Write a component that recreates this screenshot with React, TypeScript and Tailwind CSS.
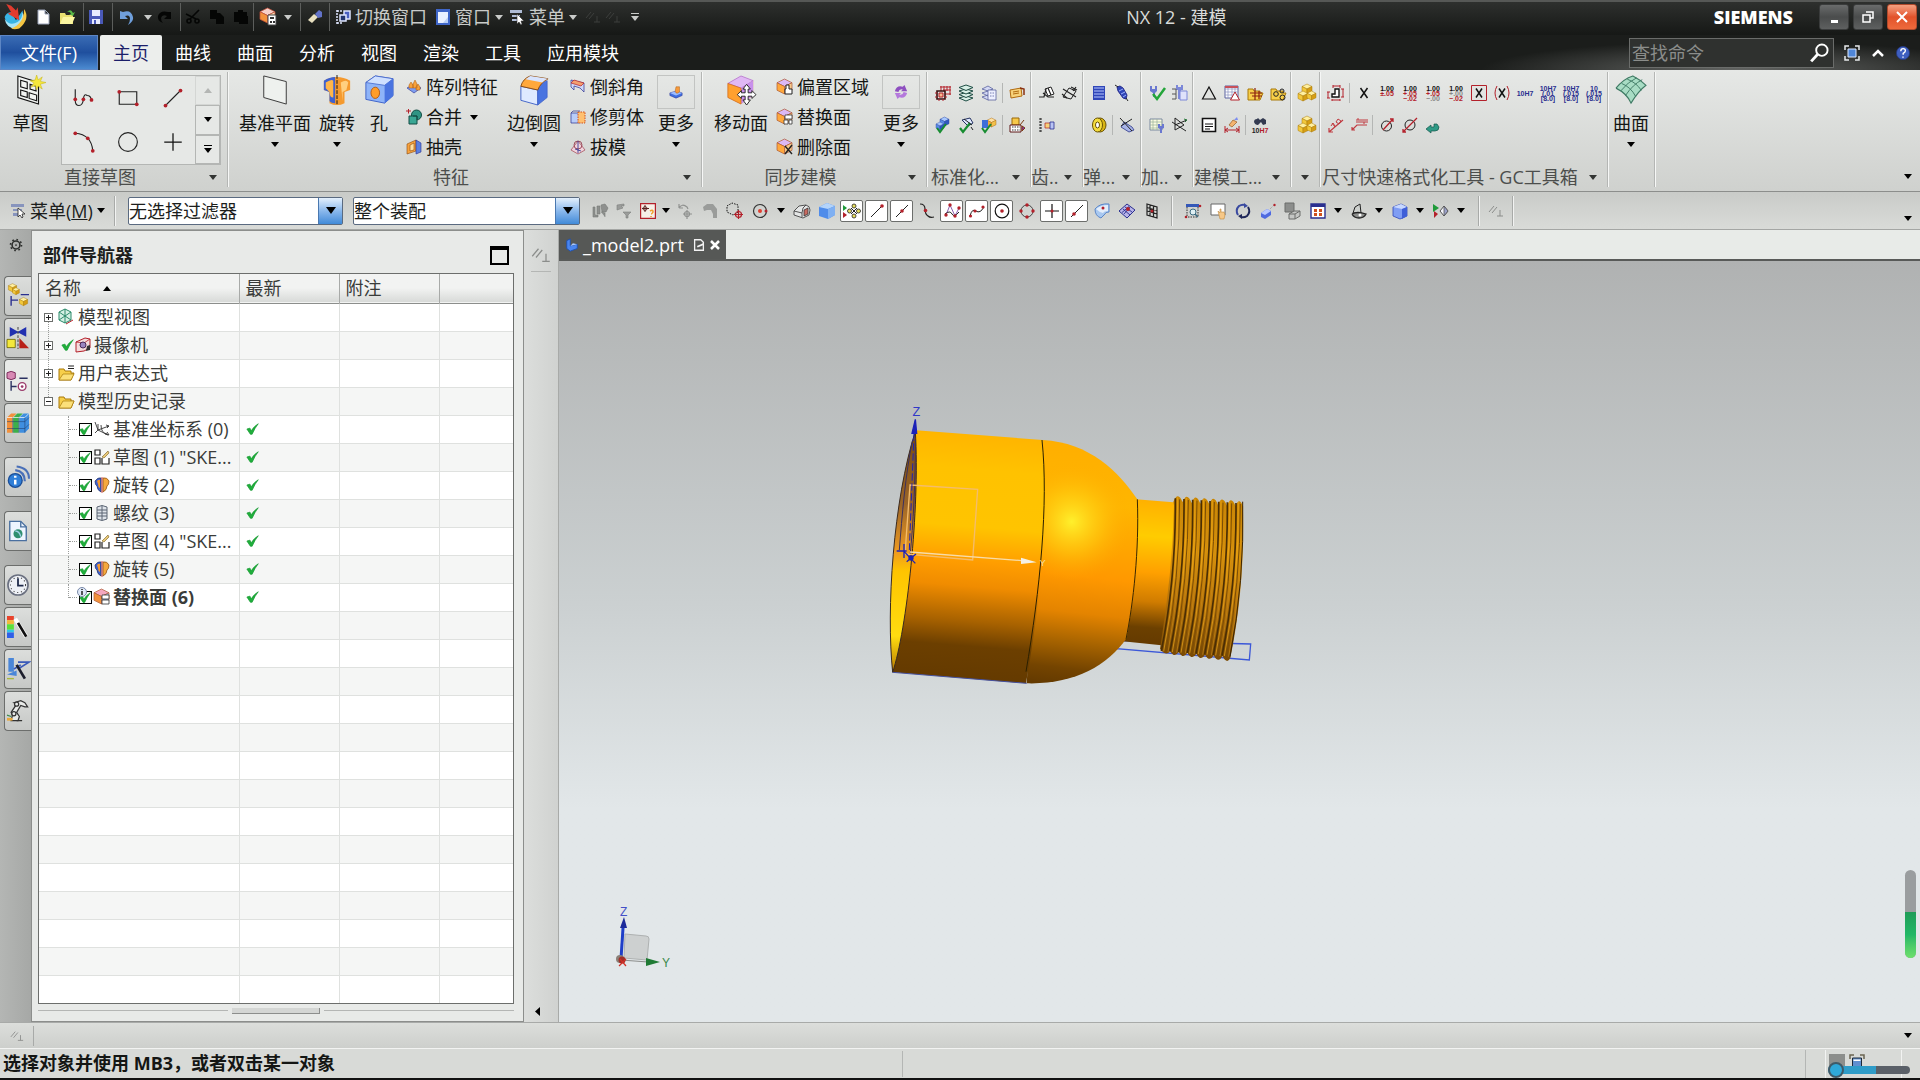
import { useState } from "react";
import type { ReactNode } from "react";
import clsx from "clsx";

const RED = "#b3202a";
const NAVY = "#2a2f8f";

/* ---------- drawing helpers ---------- */

interface CubeProps {
  x?: number;
  y?: number;
  s?: number;
  top?: string;
  left?: string;
  right?: string;
  line?: string;
}

function Cube({
  x = 1,
  y = 1,
  s = 14,
  top = "#cfe0ff",
  left = "#7fa6f5",
  right = "#3b63d0",
  line = "#2c48a0",
}: CubeProps) {
  const h = s / 2;
  const q = s / 4;
  return (
    <g stroke={line} strokeWidth={s / 20} strokeLinejoin="round">
      <path d={`M${x} ${y + q}l${h} ${-q}l${h} ${q}l${-h} ${q}z`} fill={top} />
      <path d={`M${x} ${y + q}l${h} ${q}v${h}l${-h} ${-q}z`} fill={left} />
      <path d={`M${x + s} ${y + q}l${-h} ${q}v${h}l${h} ${-q}z`} fill={right} />
    </g>
  );
}

const orangeCube = (
  <Cube x={0} y={0} s={15} top="#dcb8f4" left="#ffa83c" right="#f6c98c" line="#b0603c" />
);

const yellowCubes = (
  <>
    <Cube x={3} y={-1} s={10} top="#fff0a0" left="#f2c83c" right="#d69e14" line="#a87808" />
    <Cube x={-1} y={6} s={10} top="#fff0a0" left="#f2c83c" right="#d69e14" line="#a87808" />
    <Cube x={8} y={6} s={9} top="#fff0a0" left="#f2c83c" right="#d69e14" line="#a87808" />
  </>
);

const folder = (
  <path d="M1 4h5l1 2h6v2h3l-3 7H1z" fill="#f7cf4a" stroke="#a87808" />
);

const tick = (
  <path d="M1 8l3.500-1l1.500 3q3-5 8-8q-4 5-7 12H5z" fill="#1fae3a" stroke="#149a30" strokeWidth=".8" />
);

function Dots({ points, fill = RED, r = 1.3 }: { points: number[][]; fill?: string; r?: number }) {
  return (
    <>
      {points.map(([x, y]) => (
        <circle key={`${x}-${y}`} cx={x} cy={y} r={r} fill={fill} />
      ))}
    </>
  );
}

function Tolerance({ rows, colors }: { rows: string[]; colors: string[] }) {
  return (
    <g fontFamily="Liberation Sans" fontWeight="bold" textAnchor="middle" fontSize="7">
      {rows.map((row, i) => (
        <text key={i} x="8" y={6 + i * 5} fill={colors[i]}>
          {row}
        </text>
      ))}
    </g>
  );
}

/* ---------- icons, all on a 16 x 16 grid ---------- */

const icons: Record<string, ReactNode> = {
  logo: (
    <>
      <path d="M1 8q1-3 4-3l3 5l4-6q2 7-4 11q-6-1-7-7" fill="#38b4e4" />
      <path d="M1 9q3 5 8 2q3-2 3-6q3 7-4 10q-6 0-7-6" fill="#a8e4f6" />
      <path d="M2 0l3 1l3 3l1-2l1 8L3 6l2-1z" fill="#e23b2e" />
      <path d="M13 3q4 6-3 12q-3 1-5 0q8-3 8-12" fill="#f4c542" />
    </>
  ),
  newFile: <path d="M3 1h7l4 4v10H3zM10 1v4h4" fill="#fff" stroke="#9aa3b8" />,
  open: (
    <>
      <path d="M1 4h5l1 2h7v9H1z" fill="#e8e070" />
      <path d="M4 8h12l-3 7H1z" fill="#fbf6a0" />
      <path d="M8 3q4-4 6 1l2-1l-2 4l-4-2h2q-1-3-4-2" fill="#58b948" />
    </>
  ),
  save: (
    <>
      <path d="M1 1h14v14H1z" fill="#4a59b8" />
      <path d="M4 1h8v6H4zM4 10h8v5H4z" fill="#e8ecff" />
      <path d="M6 11h2v4H6z" fill="#4a59b8" />
    </>
  ),
  undo: <path d="M1 2v8h8l-3-3q5-2 5 3q0 3-2 6q6-4 5-8q-2-8-10-5z" fill="#6f9fdc" />,
  redo: <path d="M15 3v7H8l3-3q-5-2-6 2q0 3 2 5q-6-2-5-7q2-6 10-4z" fill="#050605" />,
  cut: (
    <g stroke="#050605" strokeWidth="1.600" fill="none">
      <path d="M14 1L5 10M1 5l10 5" />
      <circle cx="4" cy="12" r="2" />
      <circle cx="12" cy="12" r="2" />
    </g>
  ),
  copy: <path d="M1 1h7v3h3l4 4v7H7v-5H1z" fill="#050605" />,
  paste: <path d="M1 3h4V1h5v2h4v4h1v8H6v-2H1z" fill="#050605" />,
  command: (
    <>
      <Cube x={-1} y={-1} s={15} top="#f7d0c8" left="#f2913c" right="#f8d9b0" line="#c0503c" />
      <path d="M7 6h8v10H7z" fill="#fff" stroke="#444" />
      <path d="M9 8h4v2H9zM9 12h2v2H9zM12 12h2v2h-2z" fill="#333" />
    </>
  ),
  touch: (
    <>
      <path d="M1 11l6-6l4 3l-6 6z" fill="#e8e0c0" />
      <path d="M8 5l4-4l3 2v5l-4 1z" fill="#6272c8" />
    </>
  ),
  switchWindow: (
    <g fill="none" stroke="#dfe6ff" strokeWidth="1.500">
      <path d="M2 1v14M2 2h5M2 14h5" strokeDasharray="2 1" />
      <path d="M9 2h6v8H9z" fill="#4a60c0" />
      <path d="M5 6h6v6H5z" fill="#22356f" />
    </g>
  ),
  window: (
    <>
      <path d="M1 0h14v16H1z" fill="#3f66c8" />
      <path d="M3 3h10v11H3z" fill="#eaf1ff" />
      <path d="M8 14l5-6v6z" fill="#b9cff5" />
    </>
  ),
  menuLight: (
    <>
      <path d="M1 1h12v3H1zM3 6h8v2H3zM3 10h6v2H3z" fill="#aebbd6" />
      <path d="M8 5v10l2-2l2 3l1-1l-1-3h3z" fill="#fff" stroke="#333" strokeWidth=".6" />
    </>
  ),
  menuDark: (
    <>
      <path d="M1 1h13v3H1zM3 6h9v2H3zM3 10h6v3H3z" fill="#8794bd" />
      <path d="M8 5v9l2-2l2 3l1-1l-1-3h3z" fill="#fff" stroke="#222" strokeWidth=".8" />
    </>
  ),
  perp: <path d="M1 9l5-6M4 10l5-6M12 7v6M9 13h6" stroke="#8b8d8b" fill="none" />,
  perpDim: <path d="M1 9l5-6M4 10l5-6M12 7v6M9 13h6" stroke="#3d3f3d" fill="none" />,
  fullscreen: (
    <>
      <path d="M1 5V1h4M11 1h4v4M15 11v4h-4M5 15H1v-4" stroke="#e8eaec" strokeWidth="1.500" fill="none" />
      <path d="M4 4h8v8H4z" fill="#4f86d8" stroke="#dce8ff" />
    </>
  ),
  fullscreenDark: (
    <>
      <path d="M1 5V1h4M11 1h4v4" stroke="#6a6450" strokeWidth="1.500" fill="none" />
      <path d="M3.500 4h9v9h-9z" fill="#5f8fd0" stroke="#1c2a3a" />
      <path d="M4.500 5.500h7v1.500h-7z" fill="#fff" />
    </>
  ),
  help: (
    <>
      <circle cx="8" cy="8" r="7.500" fill="#3e5fc0" stroke="#26387c" />
      <path d="M5.500 6q0-3 2.700-3t2.500 2.500q0 1.500-2.500 3v1.500M8 12v1.500" stroke="#fff" strokeWidth="1.600" fill="none" />
    </>
  ),
  search: (
    <g stroke="#fff" fill="none">
      <circle cx="10" cy="6" r="4.800" strokeWidth="1.600" />
      <path d="M6.500 9.500L1 15.500" strokeWidth="2.400" />
    </g>
  ),

  sketch: (
    <g fill="none" stroke="#111" strokeWidth=".6">
      <path d="M1 .5l11 3.500v11.500L1 12z" fill="#f2f4f2" />
      <path d="M2.500 2.800l3.500 1v3.500l-3.500-1zM7.500 5l3.200 1v2.500l-3.200-1zM2.500 8l3.500 1v3l-3.500-1zM7 9.500l4 1.200v3L7 12.500z" />
      <path d="M11 0l.8 2.600L14 1l-1 2.400l3 .6l-3 .9l1 2.600l-2.200-1.600L11 8l-.6-2.400L8 6.500l1.600-2.200L7.500 3l2.700-.3z" fill="#f6e83c" stroke="#c8b820" strokeWidth=".3" />
    </g>
  ),
  profile: (
    <>
      <path d="M1 1v9q0 4 3 4t3.500-5t3-3q3 0 3.500 4" stroke="#222" fill="none" strokeWidth=".9" />
      <Dots points={[[1, 9], [7.500, 9], [14, 9.500]]} r={1.5} />
    </>
  ),
  rect: (
    <>
      <path d="M1 3h14v10H1z" stroke="#222" fill="none" strokeWidth=".9" />
      <Dots points={[[1, 3], [15, 13]]} r={1.5} />
    </>
  ),
  line: (
    <>
      <path d="M2 14L14 2" stroke="#222" strokeWidth=".9" />
      <Dots points={[[2, 14], [14, 2]]} r={1.5} />
    </>
  ),
  arc: (
    <>
      <path d="M1 1q13 1 14 14" stroke="#222" fill="none" strokeWidth=".9" />
      <Dots points={[[1, 1], [11, 5], [15, 15]]} r={1.5} />
    </>
  ),
  circle: <circle cx="8" cy="8" r="7.500" stroke="#222" fill="none" strokeWidth=".9" />,
  plus: <path d="M8 1v14M1 8h14" stroke="#111" />,
  datumPlane: <path d="M2 .5l12 3v12L2 12z" fill="#eef1ee" stroke="#333" strokeWidth=".5" />,
  revolve: (
    <>
      <path d="M1 3q7-4 14 0v5l-3 1v6q-4 2-8 0V9L1 8z" fill="#f59a2e" />
      <path d="M1 3q3-2 6-2v14q-2 0-3-1V9L1 8z" fill="#3f62d0" />
      <path d="M2 4q3-2 4-1v9q-2 0-2-3L2 7z" fill="#ffb64a" />
      <path d="M10 4q3-2 4 0l-1 4l-2 1v5z" fill="#ffd080" />
      <path d="M8 0v16" stroke="#111" strokeWidth=".5" strokeDasharray="2 .7" />
    </>
  ),
  revolveNode: (
    <>
      <path d="M1 4q3-4 6-3v14q-4-2-4-6q-2-1-2-5" fill="#3f62d0" stroke="#23305f" strokeWidth=".7" />
      <path d="M3 4q2-2 3-1v8q-2-1-2-4z" fill="#f59a2e" />
      <path d="M9 1q4-1 6 3q0 4-2 5q0 4-4 6z" fill="#f5a83e" stroke="#8a4a10" strokeWidth=".7" />
      <path d="M8 0v16" stroke="#c02020" strokeWidth=".8" />
    </>
  ),
  hole: (
    <>
      <path d="M1 4l5-3.500l9.500 1.500v9L11 15L1 13z" fill="#8fb4f8" stroke="#3f62c8" strokeWidth=".5" />
      <path d="M1 4l10 1.500l4.500-3.500L6 .5z" fill="#cfe0ff" stroke="#3f62c8" strokeWidth=".4" />
      <path d="M11 5.500l4.500-3.500v9L11 15z" fill="#4a74e0" />
      <ellipse cx="6" cy="9.500" rx="2.300" ry="3" fill="#ff9d2a" stroke="#b35a10" strokeWidth=".5" />
    </>
  ),
  pattern: (
    <>
      <path d="M1 9l7-4l7 4l-7 5z" fill="#7d9df0" stroke={NAVY} strokeWidth=".6" />
      <path d="M3 6l2-3l2 3v3H3zM7 5l2-4l2 4v4H7zM10 8l2-3l2 3v3h-4z" fill="#f7a23c" stroke="#a85a10" strokeWidth=".5" />
    </>
  ),
  unite: (
    <>
      <circle cx="10.500" cy="6" r="5" fill="#2f9484" stroke="#124d44" />
      <path d="M3 7h8v8H3z" fill="#3aa794" stroke="#124d44" />
      <path d="M7 7h4v4" fill="none" stroke="#124d44" />
      <path d="M0 2h5M2.500 0v4.500" stroke={RED} />
    </>
  ),
  shell: (
    <>
      <path d="M1 5l9-4v11l-9 3z" fill="#f7a23c" stroke="#8a4a10" strokeWidth=".6" />
      <path d="M10 1l5 3v9l-5 2z" fill="#5a80e0" stroke={NAVY} strokeWidth=".6" />
      <path d="M4 6l4-2v7l-4 1z" fill="#ffe0a0" stroke="#8a4a10" strokeWidth=".6" />
    </>
  ),
  edgeBlend: (
    <>
      <path d="M1 6l9 2v8L1 13.500z" fill="#dfeaff" stroke="#3f62c8" strokeWidth=".5" />
      <path d="M10 8q1-4 5-5v9l-5 4z" fill="#4a74e0" stroke="#3f62c8" strokeWidth=".4" />
      <path d="M1 6q1-4 5-5.500l9.500 1.500q-4 2-5.500 6z" fill="#ffa83c" stroke="#8a4a10" strokeWidth=".5" />
      <path d="M6 .5l9.500 1.500q-2 .6-3 2L3.500 2.200z" fill="#d8e4ff" />
    </>
  ),
  chamfer: (
    <>
      <path d="M1 1l13 3v9l-4-4l-6-2v4L1 8z" fill="#cfd9f8" stroke={NAVY} strokeWidth=".7" />
      <path d="M1 4l10 3l3-3L4 1z" fill="#f4a070" stroke={RED} strokeWidth=".7" />
    </>
  ),
  trim: (
    <>
      <path d="M1 4h8v10H1z" fill="#b9ccf8" stroke={NAVY} strokeWidth=".7" />
      <path d="M8 3h7v11H8z" fill="#ffc070" stroke="#d0501c" strokeDasharray="1.500 1" />
      <path d="M1 4l2-2h7" fill="none" stroke={NAVY} strokeWidth=".7" />
    </>
  ),
  draft: (
    <>
      <path d="M1 11l7-9l7 9l-7 4z" fill="#f0d4dc" stroke="#a04050" strokeWidth=".7" />
      <circle cx="8" cy="6" r="4" fill="none" stroke="#a05060" />
      <path d="M8 2v12M5 10l6 2" stroke={NAVY} strokeWidth=".8" />
    </>
  ),
  more: (
    <>
      <path d="M1 9l7-2l7 2v3l-7 3l-7-3z" fill="#3f6fe0" stroke={NAVY} strokeWidth=".6" />
      <path d="M1 9l7 3l7-3l-7-2z" fill="#9dbcff" />
      <path d="M8 2h4v6q-2 2-4 1l-1-2z" fill="#f79a3c" stroke="#a85a10" strokeWidth=".5" />
    </>
  ),
  moveFace: (
    <>
      <path d="M1 4.500L8 .5l6.500 2.500v8L8 15.500L1 12z" fill="#f6b061" />
      <path d="M1 4.500L8 .5l6.500 2.500L8 7z" fill="#e0b8f4" stroke="#b070d8" strokeWidth=".4" />
      <path d="M8 7l6.500-4v8L8 15.500z" fill="#c890ec" />
      <path d="M1 4.500L8 7v8.500L1 12z" fill="#ffa02e" stroke="#d06a1c" strokeWidth=".4" />
      <path d="M11 5l2 2.500h-1.200V9.500h2V8.300L16 10.500l-2.200 2v-1.200h-2v2H13L11 16l-2-2.700h1.200v-2h-2v1.200L6 10.500l2.200-2.200v1.200h2v-2H9z" fill="#fff" stroke="#222" strokeWidth=".5" />
    </>
  ),
  offsetRegion: (
    <>
      {orangeCube}
      <path d="M9 6h3v4h3v5H8v-5h1z" fill="#fff" stroke="#222" />
    </>
  ),
  replaceFace: (
    <>
      {orangeCube}
      <path d="M8 6h7v4H8zM7 11h4v4H7zM12 11h3v4h-3z" fill="#fff" stroke="#333" strokeWidth=".8" />
    </>
  ),
  deleteFace: (
    <>
      {orangeCube}
      <path d="M8 7l7 8M15 6l-7 9" stroke="#222" strokeWidth="1.400" />
    </>
  ),
  refresh: (
    <>
      <path d="M1 7q2-7 9-5l2-2l3 7H8l2-2q-4-1-5 3z" fill="#8e4fc0" />
      <path d="M15 9q-2 7-9 5l-2 2l-3-7h7l-2 2q4 1 5-3z" fill="#b478dc" />
    </>
  ),

  stdFrame: (
    <g fill="none" stroke={RED}>
      <path d="M6 1v5M9 1v5M12 1v5M15 1v9M5 2h11M8 5h8M10 9h6" />
      <path d="M2 6h8v8H2z" stroke="#3a1010" strokeWidth="1.600" />
      <path d="M4 8h4v4H4z" fill="#fbb890" />
      <path d="M0 8h2M0 12h2M10 12h2M4 14v2M8 14v2" />
    </g>
  ),
  layers: (
    <g fill="#d8efe6" stroke="#1e4d44" strokeWidth="1">
      <path d="M1 13l7-2l7 2l-7 3z" />
      <path d="M1 9.500l7-2l7 2l-7 3z" />
      <path d="M1 6l7-2l7 2l-7 3z" />
      <path d="M1 2.500l7-2.500l7 2.500l-7 3z" />
    </g>
  ),
  layersDoc: (
    <g stroke="#5a62a0" strokeWidth=".8" fill="#d4d9f4">
      <path d="M1 12l6-2l5 2l-5 3zM1 8l6-2l5 2l-5 3zM1 4l6-3l5 3l-5 2z" />
      <path d="M7 5h8v10H7z" fill="#eef0ff" />
      <path d="M9 8h4M9 11h4" strokeDasharray="1.500 1" />
    </g>
  ),
  note: (
    <>
      <path d="M1 5l11-2l1 8l-11 2z" fill="#f7d27a" stroke="#b06a10" />
      <path d="M4 7l6-1M4 9l6-1" stroke="#b06a10" />
      <path d="M11 3l4 1v6" fill="none" stroke="#8a3010" strokeWidth="1.500" />
    </>
  ),
  checkPart: (
    <>
      <Cube x={5} y={0} s={9} top="#a8c8ff" left="#5a8ae8" right="#2f58c0" />
      <Cube x={1} y={5} s={8} top="#a8c8ff" left="#5a8ae8" right="#2f58c0" />
      <path d="M2 11l3 4l6-8" fill="none" stroke="#178c30" strokeWidth="2" />
    </>
  ),
  checkDraft: (
    <>
      <path d="M4 3l8-2l3 5l-5 3z" fill="#dfe8ff" stroke="#23305f" />
      <path d="M2 11l3 4l7-9" fill="none" stroke="#178c30" strokeWidth="2.200" />
      <path d="M6 2l8 6M13 10l2 3" stroke="#222" />
    </>
  ),
  checkAsm: (
    <>
      <Cube x={6} y={1} s={9} top="#ffe0a0" left="#f7a83c" right="#f2c04a" line="#a86a10" />
      <path d="M1 3h6v8H1z" fill="#3f6ed8" />
      <path d="M1 11l3 4l6-8" fill="none" stroke="#178c30" strokeWidth="2" />
    </>
  ),
  stdParts: (
    <>
      <path d="M3 1h7v7H3z" fill="#f7c94a" stroke="#9a6808" />
      <path d="M1 8h11v7H1z" fill="#fff" stroke="#5a1515" />
      <path d="M3 10h8M3 13h8" stroke="#333" strokeDasharray="1.500 1" />
      <path d="M15 3l-4 5M13 9l3 2l-3 3z" fill="#9030b0" stroke="#7a3a10" />
    </>
  ),
  gearA: (
    <>
      <path d="M6 4l6-2l3 7l-6 2z" fill="#fff" stroke="#222" />
      <path d="M0 12h5l2-8M4 8l5 4h6M9 3l3 7" stroke="#222" fill="none" strokeWidth="1.200" />
    </>
  ),
  gearB: (
    <>
      <path d="M1 12l6-9l7 3l-5 8z" fill="#e2e4e2" stroke="#222" />
      <path d="M1 4l13 8M0 9l5 4M9 2l6 3M14 2l-3 4" stroke="#222" strokeWidth="1.200" />
    </>
  ),
  gearList: (
    <>
      <path d="M1 1v14M1 2h3M1 5h3M1 8h3M1 11h3M1 14h3" stroke="#222" strokeDasharray="2 1" />
      <path d="M6 6h6v5H6z" fill="#f7d27a" stroke="#b02020" strokeWidth=".7" />
      <path d="M11 5h4v7h-4z" fill="#b9c4f4" stroke={NAVY} strokeWidth=".8" />
    </>
  ),
  spring: (
    <>
      <path d="M2 1h12v14H2z" fill="#2f46b8" />
      <path d="M3 3h10M3 6h10M3 9h10M3 12h10" stroke="#b9c8ff" />
    </>
  ),
  springTilt: (
    <>
      <path d="M3 2l3-1l3 2l4 7l-1 4l-3-1l-5-7z" fill="#2f46b8" stroke={NAVY} />
      <path d="M5 6l4-2M7 9l4-2M9 12l3-2" stroke="#9fb2ff" />
      <path d="M1 0l3 2M12 13l2 3" stroke="#222" />
    </>
  ),
  springDisc: (
    <>
      <ellipse cx="9" cy="8" rx="6" ry="7" fill="#d8b414" stroke="#6a5404" />
      <ellipse cx="6.500" cy="8" rx="5" ry="7" fill="#f4dc3c" stroke="#6a5404" />
      <ellipse cx="6.500" cy="8" rx="2" ry="3" fill="#fff" stroke="#6a5404" />
    </>
  ),
  springCut: (
    <>
      <path d="M5 5l8 5l2 3l-5 2l-8-5z" fill="#a8b4e8" stroke="#4a549a" />
      <path d="M1 1l12 13M13 2L2 9" stroke="#222" />
    </>
  ),
  machCheck: (
    <>
      <path d="M1 1h2v3h3V1h2v5L6 8v4H4V8L1 6z" fill="#6a78d0" />
      <path d="M4 9l4 5l8-11" fill="none" stroke="#23a53a" strokeWidth="2.500" />
    </>
  ),
  machDoc: (
    <>
      <path d="M4 0h2v2h3V0h2v5H4zM6 5h3v9H6z" fill="#7c88d8" />
      <path d="M0 4h4v10H0M0 9h4" fill="none" stroke="#555" />
      <path d="M8 6h7v9H8z" fill="#dfe2fb" stroke="#7c88d8" />
    </>
  ),
  machTable: (
    <>
      <path d="M1 2h12v11H1z" fill="#fbfbe0" stroke="#7a8aa0" />
      <path d="M1 5h12M1 8h12M1 11h12M4 2v11M8 2v11" stroke="#9ab09a" strokeWidth=".7" />
      <path d="M9 7h2v2h2V7h2v4l-2 1v4h-2v-4l-2-1z" fill="#6a78d0" />
    </>
  ),
  machAxis: (
    <g fill="none" stroke="#222">
      <path d="M3 1v12l9-5zM0 5l14 9M3 8l12-5" />
      <path d="M12 2l3 1l-2 2" stroke="#2a7a3a" />
    </g>
  ),
  triangle: <path d="M8 2l6.500 12h-13z" fill="none" stroke="#111" strokeWidth="1.200" />,
  gridTri: (
    <>
      <path d="M1 1h13v12H1z" fill="#fff" stroke="#5a62a0" />
      <path d="M1 4h13M1 7h13M1 10h13M4 1v12M8 1v12M11 1v12" stroke="#8a92c0" strokeWidth=".7" />
      <path d="M1 1h13v2H1z" fill="#c8505a" />
      <path d="M11 7l4.500 8h-9z" fill="#fff" stroke={RED} />
    </>
  ),
  folderPlus: (
    <>
      {folder}
      <path d="M8 3v12M3 8h12M12 6v8M5 11h10" stroke="#8a2010" strokeWidth="1.200" />
    </>
  ),
  folderGear: (
    <>
      {folder}
      <g fill="none" stroke="#222">
        <circle cx="6" cy="9" r="2.300" />
        <circle cx="12" cy="6" r="2" />
        <circle cx="12.500" cy="12.500" r="2.500" />
      </g>
    </>
  ),
  noteBlack: (
    <>
      <path d="M1.500 1.500h13v13h-13z" fill="#fff" stroke="#111" strokeWidth="1.600" />
      <path d="M4 7h8M4 9.500h8M4 12h5" stroke="#111" />
    </>
  ),
  dimBrush: (
    <>
      <path d="M5 8l4-5l4 2l-5 5z" fill="#f4b470" stroke="#8a4a10" strokeWidth=".6" />
      <path d="M10 3l3-3l1 3z" fill="#7d8df0" />
      <path d="M1 9v7M15 9v7M1 13h14M4 11l-3 2l3 2M12 11l3 2l-3 2" stroke={RED} fill="none" />
    </>
  ),
  find10h7: (
    <>
      <path d="M2 5q0-3 3-3l1-1l2 2l3-2l3 2v4l-3 1l-2-3l-3 3q-3 0-4-3" fill="#333a50" />
      <text x="8" y="16" fontSize="7" fontWeight="bold" textAnchor="middle" fontFamily="Liberation Sans" fill="#222">
        10<tspan fill={RED}>H7</tspan>
      </text>
    </>
  ),
  cubes: yellowCubes,
  dimFrame: (
    <g fill="none" stroke={RED}>
      <path d="M5 1h7M5 3V0M12 3V0M0 7v6M-1 7h3M-1 13h3M15 4v8M13 4h3M13 12h3M4 15h8M4 14v2M12 14v2" />
      <path d="M7 4h4v8H4V9h3z" stroke="#111" strokeWidth="1.400" fill="#fff" />
    </g>
  ),
  letterX: <path d="M4.500 3l7 10M11.500 3l-7 10" stroke="#111" strokeWidth="1.500" />,
  tol1: <Tolerance rows={["1.00", "±.05"]} colors={["#111", RED]} />,
  tol2: <Tolerance rows={["1.00", "+.05", "−.02"]} colors={["#111", RED, RED]} />,
  tol3: <Tolerance rows={["1.00", "+.05", "−.00"]} colors={["#111", RED, "#888"]} />,
  tol4: <Tolerance rows={["1.00", "+.00", "−.02"]} colors={["#111", "#888", RED]} />,
  boxX: (
    <>
      <path d="M.5 .5h15v15H.5z" fill="none" stroke={RED} />
      <path d="M5 3.500l6 9M11 3.500l-6 9" stroke="#111" strokeWidth="1.500" />
    </>
  ),
  parenX: (
    <>
      <path d="M3 1q-4 7 0 14M13 1q4 7 0 14" fill="none" stroke={RED} />
      <path d="M5 3.500l6 9M11 3.500l-6 9" stroke="#111" strokeWidth="1.500" />
    </>
  ),
  h7: (
    <text x="8" y="11" fontSize="7" fontWeight="bold" textAnchor="middle" fontFamily="Liberation Sans" fill={NAVY}>
      10H7
    </text>
  ),
  h7a: <Tolerance rows={["10H7", "(.01", "[8.0]"]} colors={[NAVY, NAVY, NAVY]} />,
  h7b: <Tolerance rows={["10H7", "(.015", "[8.0]"]} colors={[NAVY, NAVY, NAVY]} />,
  h7c: <Tolerance rows={["10", "(.015", "[8.0]"]} colors={[NAVY, NAVY, NAVY]} />,
  radius: (
    <g stroke="#c03a40" fill="none">
      <path d="M1 15L15 3M1 11v4h4" strokeWidth="1.200" />
      <path d="M3 9l2-3l2 3M4 6l3 4M8 5l2-3l3 2l-2 3z" />
    </g>
  ),
  radiusBox: (
    <g stroke="#c03a40" fill="none">
      <path d="M1 13l5-5h10M1 10v3h3" strokeWidth="1.200" />
      <path d="M6 6V2h2v4M10 6V2M12 2v4h2V2M16 2v4" />
    </g>
  ),
  diaA: (
    <g fill="none">
      <circle cx="7.500" cy="9" r="5" stroke="#222" />
      <path d="M4 13L14 2M11 2h3v3" stroke={RED} strokeWidth="1.300" />
    </g>
  ),
  diaB: (
    <g fill="none">
      <circle cx="8" cy="8" r="5" stroke="#222" />
      <path d="M1 15L15 1M1 12v3h3" stroke={RED} strokeWidth="1.300" />
    </g>
  ),
  apply: (
    <path d="M1 12l5-4v2h3V7h3l2 3q0 4-4 4H6v2z" fill="#2f9a86" stroke="#14574a" strokeWidth=".7" />
  ),
  surface: (
    <>
      <path d="M0 7q4-5 9-6.500q4 2 7 5q-4 3-8 9.500q-2-5-8-8" fill="#a8dcc4" stroke="#3f7a64" strokeWidth=".6" />
      <path d="M3 4.500q5 2 7.500 7M6 2.200q5 2 7.500 6M2.500 8.500q4-5 8.500-7M5 11q4-6 9-8.500" fill="none" stroke="#3f7a64" strokeWidth=".5" />
    </>
  ),

  selInvert: (
    <g fill="#8e908e" stroke="#767876" strokeWidth=".6">
      <path d="M1 4h2v8h3v2H1zM5 3h3v8H5zM9 2l4-1l3 4l-2 4h-4zM9 9l4 1v4" />
    </g>
  ),
  selFilter: (
    <g fill="#9a9c9a" stroke="#7e807e" strokeWidth=".6">
      <path d="M1 2v5l6-2l-2-2h3V1zM7 9h8l-3 3v3h-2v-3z" />
    </g>
  ),
  snapRed: (
    <>
      <path d="M.6 .6h14.800v14.800H.6z" fill="#f6f0e8" stroke={RED} strokeWidth="1.200" />
      <path d="M5 2v7M2 5.500h7" stroke="#5a2020" />
      <circle cx="5" cy="5.500" r="2" fill="none" stroke="#5a2020" strokeWidth=".8" />
      <path d="M10 8q3-2 3 1q-1 2-2 2M11 13v1" stroke="#f2a02a" strokeWidth="1.600" fill="none" />
    </>
  ),
  snapGrey: (
    <g fill="none" stroke="#909290" strokeWidth="1.200">
      <path d="M2 5q3-5 8-1l1 2M2 5V1M2 5h4M10 7v9M6 11h9" />
      <circle cx="10" cy="11" r="2.500" />
    </g>
  ),
  hammer: <path d="M1 4l4-3h6l4 5v9h-4v-4l-2-4H5L2 8z" fill="#9a9c9a" />,
  cubeTarget: (
    <>
      <path d="M0 3l5-3l6 2v7l-5 3l-6-3z" fill="none" stroke="#111" strokeDasharray="1.500 1.200" />
      <circle cx="11.500" cy="11.500" r="3" fill="none" stroke={RED} strokeWidth="1.200" />
      <path d="M11.500 7v9M7 11.500h9" stroke={RED} strokeWidth="1.200" />
    </>
  ),
  target: (
    <>
      <circle cx="8" cy="8" r="6.500" fill="none" stroke="#333" strokeWidth="1.200" />
      <circle cx="8" cy="8" r="2" fill="#e04030" />
      <circle cx="14" cy="8" r="1.500" fill={RED} />
    </>
  ),
  chestGrey: (
    <>
      <path d="M0 8l5-5l7-1q4 1 4 5l-1 5l-6 3l-9-3z" fill="#e4e6e6" stroke="#444" strokeWidth=".9" />
      <path d="M0 8l8 2v4M8 10q0-6 4-8" fill="none" stroke="#444" strokeWidth=".9" />
      <path d="M10 7l4-2v6l-4 2z" fill="#c86a60" stroke="#333" strokeWidth=".8" />
    </>
  ),
  cubeBlue: (
    <>
      <path d="M0 4l8-4l8 3v9l-7 4l-9-3z" fill="#4f8cea" />
      <path d="M0 4l8-4l8 3l-7 3z" fill="#b4d4fa" />
      <path d="M9 6l7-3v9l-7 4z" fill="#7fb0f2" />
    </>
  ),
  snapAll: (
    <>
      <path d="M-1 2l4 3l-4 3z" fill="#1f9a3a" />
      <path d="M-1 9l4 3l-4 3z" fill={RED} />
      <g fill="#e8e060" stroke="#222" strokeWidth=".8">
        <circle cx="10" cy="3" r="2" />
        <circle cx="5.500" cy="8" r="2" />
        <circle cx="14.500" cy="8" r="2" />
        <circle cx="10" cy="13" r="2" />
      </g>
      <path d="M7 5l6 6M13 5l-6 6" stroke="#222" />
    </>
  ),
  midPoint: (
    <>
      <path d="M2 14L14 2" stroke="#222" />
      <Dots points={[[8, 8]]} r={1.8} />
    </>
  ),
  endPoint: (
    <>
      <path d="M2 14L14 2" stroke="#222" />
      <Dots points={[[13, 3]]} r={1.8} />
    </>
  ),
  controlPoint: (
    <>
      <path d="M1 1q5 0 5 5t3 7q2 2 6 1" fill="none" stroke="#222" strokeWidth="1.200" />
      <Dots points={[[6.500, 7.500]]} r={1.8} />
    </>
  ),
  polePoint: (
    <>
      <path d="M2 12L6 2l5 11l4-8" fill="none" stroke="#8a5ab0" />
      <path d="M1 11q5-4 7 0t7-2" fill="none" stroke="#222" />
      <Dots points={[[2, 12], [6, 2], [11, 13], [15, 5]]} r={1.7} />
    </>
  ),
  splinePoint: (
    <>
      <path d="M1 13q2-8 6-5t8-4" fill="none" stroke="#222" />
      <Dots points={[[1.500, 13], [6, 8], [14, 4]]} r={1.6} />
    </>
  ),
  arcCenter: (
    <>
      <circle cx="8" cy="8" r="6.800" fill="none" stroke="#111" strokeWidth="1.200" />
      <Dots points={[[8, 8]]} r={1.8} />
    </>
  ),
  quadrant: (
    <>
      <circle cx="8" cy="8" r="6" fill="none" stroke="#444" />
      <Dots points={[[8, 2], [14, 8], [8, 14], [2, 8]]} r={1.7} />
    </>
  ),
  crossPoint: (
    <>
      <path d="M8 1v14M1 8h14" stroke="#111" strokeWidth="1.200" />
      <Dots points={[[8, 8]]} r={1.5} />
    </>
  ),
  onCurve: (
    <>
      <path d="M2 14L14 2" stroke="#222" />
      <Dots points={[[5, 11]]} r={1.8} />
    </>
  ),
  facePoint: (
    <>
      <path d="M1 6q5-6 14-5v8q-4 0-4 2l-4 4q-6-2-6-9" fill="#a8c8f0" stroke="#5a86c8" />
      <path d="M2 6q5-4 12-4v6q-4 0-5 2q-4-1-7-4z" fill="#e4eefb" />
      <Dots points={[[9, 5]]} r={1.5} />
    </>
  ),
  meshPoint: (
    <>
      <path d="M0 8l8-7l8 6l-8 8z" fill="#b8b4e8" stroke={NAVY} />
      <path d="M4 6l7 6M6 4l7 5M5 11l6-7M3 9.500l7-6" stroke={NAVY} strokeWidth=".9" />
      <Dots points={[[9, 6]]} r={2} />
    </>
  ),
  gridPoint: (
    <>
      <path d="M3 1l10 3v11L3 12zM3 4.500l10 3M3 8l10 3M6 2v11M9.500 3v11" fill="none" stroke="#222" strokeWidth="1.200" />
      <Dots points={[[8, 8]]} r={1.5} />
    </>
  ),
  fit: (
    <>
      <path d="M1 1h13v3H1z" fill="#3458b8" />
      <path d="M2 4v9M13 4v9M3 14h9" stroke="#333" strokeDasharray="1.500 1" />
      <circle cx="8" cy="9" r="3" fill="#dff0f4" stroke="#3a6a80" />
      <path d="M10 11l3 3" stroke="#3a6a80" strokeWidth="1.500" />
      <Dots points={[[1, 14], [15, 3]]} />
    </>
  ),
  pan: (
    <>
      <path d="M1 1h14v11H1z" fill="#fff" stroke="#666" />
      <path d="M8 8l2 2V6h1v3h3l1 3l-1 4h-4z" fill="#f6c888" stroke="#c08a40" strokeWidth=".6" />
    </>
  ),
  rotate: (
    <g fill="none" strokeWidth="2">
      <path d="M3 12q-3-5 1-9q3-2 6-1" stroke="#3a4aa0" />
      <path d="M13 4q3 5-1 9q-3 2-6 1" stroke="#1e2658" />
      <path d="M9 0l4 3l-4 2z" fill="#3a4aa0" stroke="none" />
      <path d="M7 16l-4-3l4-2z" fill="#1e2658" stroke="none" />
    </g>
  ),
  orient: (
    <>
      <path d="M1 10l6-4l4 2v4l-6 4l-4-2z" fill="#4f6ae0" />
      <path d="M1 10l6-4l4 2l-6 4z" fill="#b8c8ff" />
      <path d="M10 6l4-4" stroke="#888" strokeWidth=".8" strokeDasharray="1 1" />
      <Dots points={[[14.500, 2]]} r={1.2} />
    </>
  ),
  greyCubes: (
    <>
      <path d="M0 0h9v9H0z" fill="#8c8e8c" stroke="#6a6c6a" />
      <path d="M4 11l5-3h6v5l-5 3H4zM4 11h6v5M10 11l5-3" fill="#c4c6c4" stroke="#6a6c6a" />
    </>
  ),
  layout: (
    <>
      <path d="M1 1h14v14H1z" fill="#fff" stroke={NAVY} strokeWidth="1.400" />
      <path d="M1 1h14v3H1z" fill={NAVY} />
      <path d="M4 6h3v3H4zM9 6h3v3H9zM4 10h3v3H4zM9 10h3v3H9z" fill="#d0501c" />
    </>
  ),
  hideShow: (
    <>
      <path d="M2 10l2-6l5-3l1 9z" fill="#cdd0cd" stroke="#222" />
      <path d="M1 11q5-3 14 0q-2 4-7 4t-7-4" fill="#8c8e8c" stroke="#222" strokeWidth="1.300" />
      <circle cx="9" cy="12" r="1.500" fill="#fff" />
    </>
  ),
  shaded: (
    <>
      <path d="M1 4l8-3l6 3v9l-7 3l-7-3z" fill="#7f9df4" stroke="#2f46b8" strokeWidth=".8" />
      <path d="M1 4l8-3l6 3l-5 2z" fill="#c8d8ff" />
      <path d="M10 6l5-2v9l-5 3z" fill="#3f5fd8" />
    </>
  ),
  editSection: (
    <>
      <path d="M0 1l6 4l-6 4z" fill="#1f9a3a" />
      <path d="M1 8l4 3l-4 4z" fill={RED} />
      <path d="M7 8l4-5l4 5l-4 5z" fill="#f2f3fa" stroke="#555" />
      <path d="M11 3v10l4-5z" fill="#9aa0c8" stroke="#555" strokeWidth=".8" />
    </>
  ),

  gear: (
    <>
      <circle cx="8" cy="8" r="4.500" fill="none" stroke="#2c2e2c" strokeWidth="1.800" />
      <circle cx="8" cy="8" r="6.300" fill="none" stroke="#2c2e2c" strokeWidth="1.800" strokeDasharray="1.900 3" />
      <circle cx="8" cy="8" r="1" fill="#2c2e2c" />
    </>
  ),
  navAssembly: (
    <>
      <Cube x={1} y={-1} s={6} top="#fff0a0" left="#f2c83c" right="#d69e14" line="#a87808" />
      <Cube x={4} y={2} s={5} top="#fff0a0" left="#f2c83c" right="#d69e14" line="#a87808" />
      <path d="M3 8v7M3 11h5M10 7h6" stroke={NAVY} fill="none" />
      <Cube x={9} y={9} s={6} top="#fff0a0" left="#f2c83c" right="#d69e14" line="#a87808" />
    </>
  ),
  navConstraint: (
    <>
      <path d="M2 0l6 3.500l6-3.500v7L8 4L2 7z" fill="#2230b0" />
      <path d="M8 0v16" stroke="#222" strokeWidth=".6" strokeDasharray="2 1" />
      <path d="M0 9h6v6H0z" fill="#f4e83c" stroke="#6a6404" strokeWidth=".6" />
      <path d="M9 8l7 7.500H9z" fill="#b82018" />
    </>
  ),
  navPart: (
    <>
      <path d="M0 2q3-2 6 0v4q-3 2-6 0z" fill="#d889b4" stroke="#7a2a5a" strokeWidth=".7" />
      <path d="M3 8v7M3 12h4M9 6h6" stroke="#2a3060" fill="none" />
      <circle cx="11" cy="12" r="2.800" fill="#fff" stroke="#9a3a6a" />
      <circle cx="11" cy="12" r="1" fill="#9a3a6a" />
    </>
  ),
  navLibrary: (
    <>
      <path d="M0 4l3-3h4L4 4v11H0z" fill="#f2913c" />
      <path d="M4.500 4l3-3h4L8.500 4v11h-4z" fill="#3bb04a" />
      <path d="M9 4l3-3h4v11l-3 3H9z" fill="#3f8fe0" />
      <path d="M0 4h13l3-3" fill="none" stroke="#fff" strokeWidth=".5" />
      <path d="M0 7h13l3-3M0 12h13l3-3M4.200 4v11M8.700 4v11M13 4v11" stroke="#1e3a6a" strokeWidth=".4" fill="none" />
    </>
  ),
  navWeb: (
    <>
      <circle cx="6" cy="10.500" r="5" fill="#2f7fd8" stroke="#1c4f98" />
      <path d="M6 7v1.500M6 10v3.500" stroke="#fff" strokeWidth="1.800" />
      <path d="M6 3q7 1 7 8M7 .3q9 1 9 9" fill="none" stroke="#4a70b8" strokeWidth="1.500" />
    </>
  ),
  navBrowser: (
    <>
      <path d="M2 1h8l4 4v10H2z" fill="#eef5ff" stroke="#4a70a0" />
      <path d="M10 1v4h4" fill="none" stroke="#4a70a0" />
      <circle cx="8" cy="10" r="3.300" fill="#2f8f70" />
      <path d="M6 8q3 0 4 4" stroke="#9fd0e8" fill="none" />
    </>
  ),
  navHistory: (
    <>
      <circle cx="8" cy="8" r="7.300" fill="#eef1f6" stroke="#6a7080" strokeWidth="1.200" />
      <path d="M8 3V8.500h4" stroke="#1e2a4a" strokeWidth="1.300" fill="none" />
      <circle cx="8" cy="8" r="5.500" fill="none" stroke="#444" strokeWidth=".8" strokeDasharray=".8 2" />
    </>
  ),
  navColor: (
    <>
      <path d="M0 0h5v3H0z" fill="#e8442c" />
      <path d="M0 3h5v3H0z" fill="#f4b83c" />
      <path d="M0 6h5v4H0z" fill="#5be03a" />
      <path d="M0 10h5v2H0z" fill="#2fc8e8" />
      <path d="M0 12h5v4H0z" fill="#2f5fe8" />
      <path d="M6 2l8 13" stroke="#fff" strokeWidth="3" />
      <path d="M8 5l6 10" stroke="#111" strokeWidth="2" />
    </>
  ),
  navTool: (
    <>
      <path d="M1 0h4v10H1zM0 12l7-3v4z" fill="#4a86d8" />
      <path d="M8 8l8-5H8M5 8l5-3" stroke="#3a5ab8" strokeWidth="1.200" fill="none" />
      <path d="M7 5l6 10" stroke="#1c1e2c" strokeWidth="2" />
      <path d="M0 15h5" stroke="#a8b83c" />
    </>
  ),
  navRobot: (
    <g fill="#e8eae8" stroke="#333" strokeWidth=".9">
      <path d="M5 2l5-1.500l3 1.500l2 3l-2 0l-3-1l-3 5l2 3l-1 3H3l1-4l-1-2l4-6z" />
      <circle cx="7" cy="3" r="1.500" />
      <circle cx="5" cy="10" r="1.500" />
      <path d="M0 14h4" stroke="#e8a83c" strokeWidth="2" />
      <path d="M0 11l3 1" stroke="#3a8a4a" />
      <path d="M7 15h4" />
    </g>
  ),

  modelViews: (
    <>
      <path d="M7 0l6 3v8l-6 3l-6-3V3zM7 0v14M1 3l12 8M13 3L1 11" fill="#d4f0e4" stroke="#2a8a6a" strokeWidth="1" />
      <path d="M8 15l7-4" stroke={RED} />
    </>
  ),
  camera: (
    <>
      <path d="M1 5l9-4l5 1v9l-6 3l-8 1z" fill="#f4dcdc" stroke={RED} />
      <path d="M1 5l8 1l6-4" fill="none" stroke={RED} strokeWidth=".8" />
      <circle cx="8" cy="8" r="3" fill="#9a86c0" stroke="#4a2a5a" />
      <path d="M12 9l3-1v5l-4 1z" fill="#333" />
    </>
  ),
  folderExpr: (
    <>
      {folder}
      <path d="M5 9h11l-3 6H1z" fill="#fbe07a" stroke="#a87808" strokeWidth=".7" />
      <path d="M10 1h6M10 3.500h6" stroke="#222" />
    </>
  ),
  folderOpen: (
    <>
      {folder}
      <path d="M5 8h11l-3 7H1z" fill="#fbe07a" stroke="#a87808" strokeWidth=".7" />
    </>
  ),
  csys: (
    <g fill="none" stroke="#333" strokeWidth=".9">
      <path d="M1 1l3 8l10 5M4 9l11-4M4 3v6l-3 3M7 4q0 8 6 9" />
      <path d="M11 13l4 1l-2-3M12 4l3 1l-2 2" />
    </g>
  ),
  sketchNode: (
    <>
      <path d="M1 1h5v5H1zM1 9h5v6H1zM8 9v6h7V9" fill="#fff" stroke="#222" strokeWidth="1.200" />
      <path d="M8 8l6-6l1 2l-5 5z" fill="#e8c878" stroke="#7a6020" strokeWidth=".6" />
    </>
  ),
  thread: (
    <>
      <path d="M3 2q5-3 10 0v12q-5 3-10 0z" fill="#dfe4ea" stroke="#5a6472" />
      <path d="M3 5h10M3 8h10M3 11h10M8 1v14" stroke="#5a6472" />
    </>
  ),
  replaceNode: (
    <>
      <Cube x={0} y={0} s={15} top="#f4a8c0" left="#f2913c" right="#a8c4f4" line="#b0603c" />
      <path d="M8 6h7v4H8zM8 11h7v4H8z" fill="#fff" stroke="#333" strokeWidth=".8" />
    </>
  ),
  check: tick,
  partFile: (
    <>
      <path d="M2 3l4-2v8l8-2v5l-8 3l-4-3z" fill="#4a86f0" stroke="#1c4fb0" />
      <path d="M6 9l3-3l5 1" fill="#a8c8ff" />
    </>
  ),
  docEdit: (
    <>
      <path d="M3 2h7l3 3v9H3z" fill="none" stroke="#f2f2f2" strokeWidth="1.500" />
      <path d="M6 10l7-3" stroke="#f2f2f2" strokeWidth="2" />
    </>
  ),
};

function Icon({ name, className = "size-4" }: { name: string; className?: string }) {
  return (
    <svg viewBox="0 0 16 16" className={clsx("shrink-0 overflow-visible", className)} aria-hidden="true">
      {icons[name]}
    </svg>
  );
}

function Caret({ className = "text-black" }: { className?: string }) {
  return (
    <svg viewBox="0 0 8 5" className={clsx("h-[5px] w-2 shrink-0", className)} aria-hidden="true">
      <path d="M0 0h8L4 5z" fill="currentColor" />
    </svg>
  );
}

/* ---------- title bar ---------- */

function QuickButton({ name, label, className = "w-6" }: { name: string; label: string; className?: string }) {
  return (
    <button aria-label={label} className={clsx("flex h-6 items-center justify-center", className)}>
      <Icon name={name} />
    </button>
  );
}

const QuickRule = () => <span className="h-7 w-px bg-[#5c5e5c]" />;

function QuickAccess() {
  return (
    <div className="flex items-center text-[#c9cbc9]">
      <span className="flex w-[31px] justify-center">
        <Icon name="logo" className="size-[26px]" />
      </span>
      <QuickButton name="newFile" label="新建" />
      <QuickButton name="open" label="打开" className="mr-1 w-6" />
      <QuickRule />
      <QuickButton name="save" label="保存" className="mr-1 w-6" />
      <QuickRule />
      <QuickButton name="undo" label="撤消" className="w-7" />
      <Caret className="ml-[3px] text-[#c9cbc9]" />
      <QuickButton name="redo" label="重做" className="mr-1 w-6" />
      <QuickRule />
      <QuickButton name="cut" label="剪切" />
      <QuickButton name="copy" label="复制" />
      <QuickButton name="paste" label="粘贴" />
      <QuickRule />
      <QuickButton name="command" label="重复命令" className="w-[30px]" />
      <Caret className="mr-2 text-[#c9cbc9]" />
      <QuickRule />
      <QuickButton name="touch" label="触控模式" className="w-7" />
      <QuickRule />
      <button className="ml-[5px] flex items-center gap-1">
        <Icon name="switchWindow" />
        切换窗口
      </button>
      <button className="ml-2 flex items-center gap-1">
        <Icon name="window" />
        窗口
        <Caret className="text-[#c9cbc9]" />
      </button>
      <button className="ml-1.5 flex items-center gap-1">
        <Icon name="menuLight" />
        菜单
        <Caret className="text-[#c9cbc9]" />
      </button>
      <Icon name="perpDim" className="ml-2 size-4" />
      <Icon name="perpDim" className="ml-1 size-4" />
      <span className="ml-2.5 flex flex-col items-center gap-0.5">
        <span className="h-px w-2 bg-[#c9cbc9]" />
        <Caret className="text-[#c9cbc9]" />
      </span>
    </div>
  );
}

function WindowButtons() {
  const base = "flex h-[26px] w-[30px] items-center justify-center rounded-[3px] border";
  const grey = "border-[#3a3c3c] bg-linear-to-b from-[#6a6c6c] via-[#4a4c4c] to-[#5e6060]";
  return (
    <div className="flex gap-1 pr-[3px]">
      <button aria-label="最小化" className={clsx(base, grey)}>
        <span className="mt-2 h-[3px] w-[7px] bg-white" />
      </button>
      <button aria-label="还原" className={clsx(base, grey)}>
        <svg viewBox="0 0 12 12" className="size-3">
          <path d="M4 1h7v6H8M1 4h7v7H1z" fill="none" stroke="#fff" strokeWidth="1.500" />
        </svg>
      </button>
      <button
        aria-label="关闭"
        className={clsx(base, "border-[#b04a2c] bg-linear-to-b from-[#f4a080] via-[#e2522a] to-[#ee6a3c]")}
      >
        <svg viewBox="0 0 12 12" className="size-3">
          <path d="M1 1l10 10M11 1L1 11" stroke="#fff" strokeWidth="2" />
        </svg>
      </button>
    </div>
  );
}

const TABS = ["主页", "曲线", "曲面", "分析", "视图", "渲染", "工具", "应用模块"];

function TitleBar() {
  return (
    <header className="bg-[#1b1d1b]">
      <div className="flex h-[35px] items-center border-t-2 border-[#565856] bg-linear-to-b from-[#2e302e] to-[#161816] pb-[3px]">
        <QuickAccess />
        <h1 className="flex-1 text-center text-[#d8dad8]">NX 12 - 建模</h1>
        <span className="mr-[26px] font-extrabold text-white">SIEMENS</span>
        <WindowButtons />
      </div>
      <div className="flex h-[35px] items-center bg-[radial-gradient(ellipse_260px_30px_at_1740px_36px,#777977cc,transparent)] text-white">
        <nav className="flex h-full flex-1 leading-5">
          <button className="mr-0.5 w-[98px] border border-[#5d86c4] bg-linear-to-b from-[#3a6cb4] via-[#1f4f9e] to-[#4b8ad0]">
            文件(F)
          </button>
          {TABS.map((tab, i) => (
            <button
              key={tab}
              className={clsx("px-[13px]", i === 0 && "rounded-t-xs bg-[#eceeec] text-[#1c1f6a]")}
            >
              {tab}
            </button>
          ))}
        </nav>
        <div className="flex h-[30px] w-[205px] items-center border border-[#6a6c6a] bg-[#2f312f]">
          <input
            aria-label="查找命令"
            placeholder="查找命令"
            className="min-w-0 flex-1 bg-transparent pl-0.5 placeholder:text-[#8b8d8b] focus:outline-none"
          />
          <Icon name="search" className="mr-1 size-[19px]" />
        </div>
        <div className="flex items-center gap-[11px] px-2.5">
          <Icon name="fullscreen" />
          <svg viewBox="0 0 14 10" className="h-2.5 w-3.5">
            <path d="M2 8l5-5l5 5" fill="none" stroke="#fff" strokeWidth="2.500" />
          </svg>
          <Icon name="help" className="size-3.5" />
        </div>
      </div>
    </header>
  );
}

/* ---------- ribbon ---------- */

interface GroupProps {
  label?: string;
  caret?: boolean;
  className: string;
  children: ReactNode;
}

function Group({ label, caret = true, className, children }: GroupProps) {
  return (
    <section
      className={clsx(
        "flex h-full shrink-0 flex-col border-r border-[#b4b6b4] shadow-[1px_0_0_#f6f7f6]",
        className,
      )}
    >
      <div className="flex min-h-0 flex-1">{children}</div>
      <div className="flex h-5 items-center text-[#4c4e4c]">
        <span className="min-w-0 flex-1 text-center whitespace-nowrap">{label}</span>
        {caret && (
          <span className="flex w-[27px] shrink-0 justify-center pr-0.5">
            <Caret className="text-[#333533]" />
          </span>
        )}
      </div>
    </section>
  );
}

interface BigButtonProps {
  icon: string;
  label: string;
  caret?: boolean;
  boxed?: boolean;
  className: string;
}

function BigButton({ icon, label, caret, boxed, className }: BigButtonProps) {
  return (
    <button className={clsx("flex flex-col items-center pt-[3px] whitespace-nowrap", className)}>
      {boxed ? (
        <span className="flex h-[34px] w-[38px] items-center justify-center border border-[#c2c4c2]">
          <Icon name={icon} className="size-3.5" />
        </span>
      ) : (
        <span className="h-[34px]">
          <Icon name={icon} className="size-[30px]" />
        </span>
      )}
      <span className="h-7 leading-7">{label}</span>
      <span className="flex h-3.5 items-center">{caret && <Caret />}</span>
    </button>
  );
}

interface ListItem {
  icon: string;
  label: string;
  caret?: boolean;
}

function ButtonList({ items, className }: { items: ListItem[]; className: string }) {
  return (
    <div className={clsx("flex flex-col", className)}>
      {items.map((item) => (
        <button key={item.label} className="flex h-[30px] items-center gap-1 whitespace-nowrap">
          <Icon name={item.icon} />
          {item.label}
          {item.caret && <Caret className="ml-1 text-black" />}
        </button>
      ))}
    </div>
  );
}

/** Rows of small tool buttons; "|" draws a separator. */
function IconRows({ rows }: { rows: string[][] }) {
  return (
    <div className="flex flex-col pt-[5px] pl-1">
      {rows.map((row, r) => (
        <div key={r} className="flex h-8 items-center">
          {row.map((name, i) =>
            name === "|" ? (
              <span key={i} className="flex h-5 w-[5px] justify-center">
                <span className="w-px bg-[#b4b6b4]" />
              </span>
            ) : (
              <button key={i} aria-label={name} className="flex w-[23px] justify-center">
                <Icon name={name} />
              </button>
            ),
          )}
        </div>
      ))}
    </div>
  );
}

const GALLERY = ["profile", "rect", "line", "arc", "circle", "plus"];

function SketchGallery() {
  const cell = "flex flex-1 items-center justify-center border border-[#b4b6b4]";
  return (
    <div className="mt-[3px] flex h-[90px] w-[160px] border border-[#b4b6b4] bg-[#e6e8e6]">
      <div className="grid flex-1 grid-cols-3 grid-rows-2">
        {GALLERY.map((name) => (
          <button key={name} aria-label={name} className="flex items-center justify-center">
            <Icon name={name} className="size-5" />
          </button>
        ))}
      </div>
      <div className="flex w-[25px] flex-col">
        <button aria-label="上一行" className={clsx(cell, "border-[#d4d6d4]")}>
          <Caret className="rotate-180 text-[#b4b6b4]" />
        </button>
        <button aria-label="下一行" className={cell}>
          <Caret />
        </button>
        <button aria-label="更多曲线" className={clsx(cell, "flex-col gap-0.5")}>
          <span className="h-px w-2 bg-black" />
          <Caret />
        </button>
      </div>
    </div>
  );
}

function Ribbon() {
  return (
    <div className="flex h-[122px] border-b border-[#8c8e8c] bg-linear-to-b from-[#e6e8e6] to-[#cfd1ce] pt-0.5 pb-1">
      <Group label="直接草图" className="w-[228px]">
        <BigButton icon="sketch" label="草图" className="w-[61px]" />
        <SketchGallery />
      </Group>
      <Group label="特征" className="w-[474px]">
        <BigButton icon="datumPlane" label="基准平面" caret className="ml-2 w-[78px]" />
        <BigButton icon="revolve" label="旋转" caret className="w-[46px]" />
        <BigButton icon="hole" label="孔" className="w-[38px]" />
        <ButtonList
          className="w-[105px] pl-2"
          items={[
            { icon: "pattern", label: "阵列特征" },
            { icon: "unite", label: "合并", caret: true },
            { icon: "shell", label: "抽壳" },
          ]}
        />
        <BigButton icon="edgeBlend" label="边倒圆" caret className="w-[62px]" />
        <ButtonList
          className="w-[92px] pl-[5px]"
          items={[
            { icon: "chamfer", label: "倒斜角" },
            { icon: "trim", label: "修剪体" },
            { icon: "draft", label: "拔模" },
          ]}
        />
        <BigButton icon="more" label="更多" caret boxed className="w-[38px]" />
      </Group>
      <Group label="同步建模" className="w-[225px]">
        <BigButton icon="moveFace" label="移动面" className="ml-1.5 w-[66px]" />
        <ButtonList
          className="w-[108px] pl-[3px]"
          items={[
            { icon: "offsetRegion", label: "偏置区域" },
            { icon: "replaceFace", label: "替换面" },
            { icon: "deleteFace", label: "删除面" },
          ]}
        />
        <BigButton icon="refresh" label="更多" caret boxed className="w-[38px]" />
      </Group>
      <Group label="标准化..." className="w-[104px]">
        <IconRows
          rows={[
            ["stdFrame", "layers", "layersDoc", "|", "note"],
            ["checkPart", "checkDraft", "checkAsm", "|", "stdParts"],
          ]}
        />
      </Group>
      <Group label="齿.." className="w-[52px]">
        <IconRows rows={[["gearA", "gearB"], ["gearList"]]} />
      </Group>
      <Group label="弹..." className="w-[58px]">
        <IconRows rows={[["spring", "springTilt"], ["springDisc", "|", "springCut"]]} />
      </Group>
      <Group label="加.." className="w-[52px]">
        <IconRows rows={[["machCheck", "machDoc"], ["machTable", "machAxis"]]} />
      </Group>
      <Group label="建模工..." className="w-[98px]">
        <IconRows
          rows={[
            ["triangle", "gridTri", "folderPlus", "folderGear"],
            ["noteBlack", "dimBrush", "|", "find10h7"],
          ]}
        />
      </Group>
      <Group className="w-[29px]">
        <IconRows rows={[["cubes"], ["cubes"]]} />
      </Group>
      <Group label="尺寸快速格式化工具 - GC工具箱" className="w-[288px]">
        <IconRows
          rows={[
            ["dimFrame", "|", "letterX", "tol1", "tol2", "tol3", "tol4", "boxX", "parenX", "h7", "h7a", "h7b", "h7c"],
            ["radius", "radiusBox", "|", "diaA", "diaB", "apply"],
          ]}
        />
      </Group>
      <Group caret={false} className="w-[47px]">
        <BigButton icon="surface" label="曲面" caret className="w-full" />
      </Group>
      <div className="flex flex-1 items-end justify-end pr-2 pb-2">
        <Caret />
      </div>
    </div>
  );
}

/* ---------- selection bar ---------- */

function FilterSelect({ label, className }: { label: string; className: string }) {
  return (
    <span className={clsx("relative h-7 shrink-0", className)}>
      <select
        aria-label={label}
        className="h-full w-full appearance-none rounded-xs border border-[#5a6a80] bg-white text-lg leading-none text-[#1c1e1c]"
      >
        <option>{label}</option>
      </select>
      <span className="pointer-events-none absolute inset-y-px right-px flex w-6 items-center justify-center border-l border-[#4a78b0] bg-linear-to-b from-[#e4f0fc] via-[#8ab8ec] to-[#3f8ad8]">
        <svg viewBox="0 0 10 7" className="h-[7px] w-2.5">
          <path d="M0 0h10L5 7z" />
        </svg>
      </span>
    </span>
  );
}

function Tool({ name, on, className = "w-[25px]" }: { name: string; on?: boolean; className?: string }) {
  return (
    <button aria-label={name} aria-pressed={on} className={clsx("flex shrink-0 justify-center", className)}>
      <span
        className={clsx(
          "flex h-[22px] w-[23px] items-center justify-center",
          on && "rounded-xs border border-[#6c6e6c] bg-white",
        )}
      >
        <Icon name={name} />
      </span>
    </button>
  );
}

const BarRule = () => <span className="block h-[30px] w-0.5 border-l border-[#a8aaa8] bg-[#f2f3f2]" />;

const SNAP_TOOLS: [string, boolean][] = [
  ["chestGrey", false],
  ["cubeBlue", false],
  ["snapAll", true],
  ["endPoint", true],
  ["midPoint", true],
  ["controlPoint", false],
  ["polePoint", true],
  ["splinePoint", true],
  ["arcCenter", true],
  ["quadrant", false],
  ["crossPoint", true],
  ["onCurve", true],
  ["facePoint", false],
  ["meshPoint", false],
  ["gridPoint", false],
];

function SelectionBar() {
  return (
    <div className="flex h-[38px] items-center border-b border-[#a4a6a4] bg-linear-to-b from-[#c9cbc8] to-[#d9dbd8]">
      <button className="ml-2.5 flex w-[98px] shrink-0 items-center gap-1 whitespace-nowrap text-[#1c1e1c]">
        <Icon name="menuDark" />
        <span>
          菜单(<u>M</u>)
        </span>
        <Caret />
      </button>
      <span className="mr-2 ml-1.5">
        <BarRule />
      </span>
      <FilterSelect label="无选择过滤器" className="mr-2.5 ml-1 w-[215px]" />
      <FilterSelect label="整个装配" className="mr-2 w-[227px]" />
      <Tool name="selInvert" className="w-6" />
      <Tool name="selFilter" className="w-6" />
      <Tool name="snapRed" className="w-6" />
      <span className="flex w-3 justify-center">
        <Caret />
      </span>
      <Tool name="snapGrey" />
      <Tool name="hammer" />
      <Tool name="cubeTarget" />
      <Tool name="target" />
      <span className="flex w-[17px] justify-center">
        <Caret />
      </span>
      {SNAP_TOOLS.map(([name, on]) => (
        <Tool key={name} name={name} on={on} />
      ))}
      <span className="mx-[7px]">
        <BarRule />
      </span>
      {["fit", "pan", "rotate", "orient", "greyCubes"].map((name) => (
        <Tool key={name} name={name} />
      ))}
      {["layout", "hideShow", "shaded", "editSection"].map((name) => (
        <span key={name} className="flex items-center">
          <Tool name={name} />
          <span className="flex w-4 justify-center">
            <Caret />
          </span>
        </span>
      ))}
      <span className="mr-2 ml-[9px]">
        <BarRule />
      </span>
      <Icon name="perp" className="mr-2 size-4" />
      <BarRule />
      <span className="flex h-full flex-1 items-end justify-end pr-2 pb-2">
        <Caret />
      </span>
    </div>
  );
}

/* ---------- resource bar and part navigator ---------- */

const RESOURCE_TABS = [
  { name: "navAssembly", className: "mt-6 h-10" },
  { name: "navConstraint", className: "mt-0.5 h-10" },
  { name: "navPart", className: "mt-px h-[43px] bg-[#e8eae8]" },
  { name: "navLibrary", className: "mt-px h-10" },
  { name: "navWeb", className: "mt-3.5 h-10" },
  { name: "navBrowser", className: "mt-3.5 h-10" },
  { name: "navHistory", className: "mt-3.5 h-10" },
  { name: "navColor", className: "mt-0.5 h-10" },
  { name: "navTool", className: "mt-0.5 h-10" },
  { name: "navRobot", className: "mt-0.5 h-10" },
];

function ResourceBar() {
  return (
    <aside className="flex w-[31px] shrink-0 flex-col bg-linear-to-r from-[#b4b6b4] to-[#a6a8a6]">
      <button aria-label="资源条选项" className="mt-2 flex justify-center">
        <Icon name="gear" className="size-3.5" />
      </button>
      {RESOURCE_TABS.map((tab) => (
        <button
          key={tab.name}
          aria-label={tab.name}
          className={clsx(
            "ml-1 flex items-center justify-center rounded-l-sm border border-r-0 border-[#6c6e6c]",
            tab.name !== "navPart" && "bg-linear-to-b from-[#dcdedc] to-[#c6c8c6]",
            tab.className,
          )}
        >
          <Icon name={tab.name} className="size-[22px]" />
        </button>
      ))}
    </aside>
  );
}

interface TreeNode {
  label: string;
  icon: string;
  root?: boolean;
  open?: boolean;
  checked?: boolean;
  bold?: boolean;
}

const NODES: TreeNode[] = [
  { label: "模型视图", icon: "modelViews", root: true },
  { label: "摄像机", icon: "camera", root: true, checked: true },
  { label: "用户表达式", icon: "folderExpr", root: true },
  { label: "模型历史记录", icon: "folderOpen", root: true, open: true },
  { label: "基准坐标系 (0)", icon: "csys" },
  { label: '草图 (1) "SKE...', icon: "sketchNode" },
  { label: "旋转 (2)", icon: "revolveNode" },
  { label: "螺纹 (3)", icon: "thread" },
  { label: '草图 (4) "SKE...', icon: "sketchNode" },
  { label: "旋转 (5)", icon: "revolveNode" },
  { label: "替换面 (6)", icon: "replaceNode", bold: true },
];

const ROW_COUNT = 25;

function RootCell({ node, first }: { node: TreeNode; first: boolean }) {
  const stem = "w-px flex-1 border-l border-dotted";
  return (
    <div className="flex h-full items-center">
      <div className="flex h-full w-[18px] flex-col items-center">
        <span className={clsx(stem, first ? "border-transparent" : "border-[#9a9c9a]")} />
        <button
          aria-label={node.open ? "折叠" : "展开"}
          className="flex size-[9px] items-center justify-center border border-[#6c6e6c] bg-white"
        >
          <svg viewBox="0 0 5 5" className="size-[5px]">
            <path d={node.open ? "M0 2.500h5" : "M0 2.500h5M2.500 0v5"} stroke="#222" />
          </svg>
        </button>
        <span className={clsx(stem, node.open ? "border-transparent" : "border-[#9a9c9a]")} />
      </div>
      {node.checked && <Icon name="check" className="ml-1 size-3.5" />}
      <Icon name={node.icon} className={clsx("size-4", node.checked ? "mr-[3px]" : "mr-1 ml-px")} />
      {node.label}
    </div>
  );
}

function ChildCell({ node }: { node: TreeNode }) {
  const [checked, setChecked] = useState(true);
  return (
    <div className="flex h-full items-center">
      <span
        className={clsx(
          "ml-[29px] flex w-[9px] flex-col self-start border-l border-dotted border-[#9a9c9a]",
          node.bold ? "h-3.5" : "h-7",
        )}
      >
        <span className="h-3.5 border-b border-dotted border-[#9a9c9a]" />
      </span>
      <label className={clsx("flex items-center", node.bold && "font-bold")}>
        <span className="relative mr-0.5 ml-0.5 size-[13px]">
          <input
            type="checkbox"
            checked={checked}
            onChange={(e) => setChecked(e.target.checked)}
            className="block size-[13px] appearance-none border border-black bg-white"
          />
          {checked && <Icon name="check" className="pointer-events-none absolute inset-0 size-[13px]" />}
          {node.bold && (
            <svg viewBox="0 0 10 10" className="pointer-events-none absolute -top-1 -left-0.5 size-2.5">
              <circle cx="5" cy="5" r="4.500" fill="#dfe8f8" stroke="#7a8aa8" />
              <path d="M5 2v1M5 4v4" stroke="#222" strokeWidth="1.500" />
            </svg>
          )}
        </span>
        <Icon name={node.icon} className="mr-[3px] size-4" />
        {node.label}
      </label>
    </div>
  );
}

function PartNavigator() {
  const head = "border-r border-[#a8aaa8] p-0 text-left font-normal";
  const cell = "border-r border-b border-[#dfe1df] p-0";
  return (
    <section className="flex w-[493px] shrink-0 flex-col border border-[#8c8e8c] bg-[#e8eae8] pr-[9px] pl-1.5">
      <div className="flex h-[42px] items-center justify-between pt-1.5 pr-[5px] pl-[5px]">
        <h2 className="font-bold text-[#1c1e1c]">部件导航器</h2>
        <button aria-label="最大化" className="size-[19px] border-2 border-t-4 border-black" />
      </div>
      <div className="min-h-0 flex-1 overflow-hidden border border-[#6c6e6c] bg-white">
        <table className="w-full table-fixed border-collapse text-[#3a3c3a]">
          <colgroup>
            <col className="w-[200px]" />
            <col className="w-[100px]" />
            <col className="w-[100px]" />
            <col />
          </colgroup>
          <thead>
            <tr className="h-[29px] border-b border-[#8c8e8c] bg-linear-to-b from-[#f2f3f2] from-50% to-[#d8dad8]">
              <th className={head}>
                <span className="flex items-center gap-[22px] pl-1.5 leading-7">
                  名称
                  <Caret className="rotate-180 text-black" />
                </span>
              </th>
              <th className={clsx(head, "pl-1.5 leading-7")}>最新</th>
              <th className={clsx(head, "pl-1.5 leading-7")}>附注</th>
              <th className="p-0" />
            </tr>
          </thead>
          <tbody>
            {Array.from({ length: ROW_COUNT }, (_, i) => {
              const node = NODES[i];
              return (
                <tr key={i} className={clsx("h-7", i % 2 === 1 && "bg-[#f5f6f5]")}>
                  <td className={clsx(cell, "h-7 overflow-hidden whitespace-nowrap")}>
                    {node && (
                      <div className="h-[27px]">
                        {node.root ? <RootCell node={node} first={i === 0} /> : <ChildCell node={node} />}
                      </div>
                    )}
                  </td>
                  <td className={cell}>
                    {node && !node.root && <Icon name="check" className="ml-1.5 size-3.5" />}
                  </td>
                  <td className={cell} />
                  <td className="border-b border-[#dfe1df] p-0" />
                </tr>
              );
            })}
          </tbody>
        </table>
      </div>
      <div className="flex h-[17px] items-center gap-1 pb-1">
        <span className="h-px flex-1 bg-[#b4b6b4]" />
        <span className="h-1.5 w-[88px] border-r border-b border-[#8c8e8c] bg-[#d4d6d4]" />
        <span className="h-px flex-1 bg-[#b4b6b4]" />
      </div>
    </section>
  );
}

function SideStrip() {
  return (
    <div className="flex w-[35px] shrink-0 flex-col items-center justify-between border-r border-[#a8aaa8] bg-linear-to-r from-[#dcdedc] to-[#d0d2d0] pb-1.5">
      <span className="flex h-[42px] w-5 items-center justify-center border-b border-[#b4b6b4] pt-2">
        <Icon name="perp" className="size-5" />
      </span>
      <svg viewBox="0 0 5 9" className="mr-2 h-[9px] w-[5px]">
        <path d="M5 0v9L0 4.500z" />
      </svg>
    </div>
  );
}

/* ---------- graphics window ---------- */

const TURNS = [0, 1, 2, 3, 4, 5, 6, 7];

function PartModel() {
  return (
    <svg
      viewBox="0 0 1260 960"
      className="absolute top-[129px] left-[301px] w-[420px] overflow-visible"
      fontFamily="Liberation Sans"
      role="img"
      aria-label="三维模型"
    >
      <defs>
        <linearGradient id="body" gradientUnits="userSpaceOnUse" x1="340" y1="125" x2="280" y2="870">
          <stop offset="0" stopColor="#ffb400" />
          <stop offset=".15" stopColor="#ffc200" />
          <stop offset=".38" stopColor="#ffc400" />
          <stop offset=".52" stopColor="#ff9d00" />
          <stop offset=".62" stopColor="#f08c00" />
          <stop offset=".76" stopColor="#a86200" />
          <stop offset=".86" stopColor="#6c3f00" />
          <stop offset="1" stopColor="#643a00" />
        </linearGradient>
        <linearGradient id="dome" gradientUnits="userSpaceOnUse" x1="640" y1="150" x2="560" y2="880">
          <stop offset="0" stopColor="#ffae00" />
          <stop offset=".25" stopColor="#ffb600" />
          <stop offset=".55" stopColor="#ff9800" />
          <stop offset=".7" stopColor="#e48400" />
          <stop offset=".82" stopColor="#a86400" />
          <stop offset=".93" stopColor="#744400" />
          <stop offset="1" stopColor="#643a00" />
        </linearGradient>
        <radialGradient id="shine" gradientUnits="userSpaceOnUse" cx="635" cy="395" r="180">
          <stop offset="0" stopColor="#fff02c" />
          <stop offset=".5" stopColor="#ffcc10" stopOpacity=".6" />
          <stop offset="1" stopColor="#ffa800" stopOpacity="0" />
        </radialGradient>
        <linearGradient id="neck" gradientUnits="userSpaceOnUse" x1="890" y1="330" x2="860" y2="765">
          <stop offset="0" stopColor="#ffb000" />
          <stop offset=".25" stopColor="#ffcc00" />
          <stop offset=".5" stopColor="#ffa000" />
          <stop offset=".7" stopColor="#d07c00" />
          <stop offset=".88" stopColor="#6c4000" />
          <stop offset="1" stopColor="#643a00" />
        </linearGradient>
        <linearGradient id="screw" gradientUnits="userSpaceOnUse" x1="1050" y1="320" x2="1010" y2="800">
          <stop offset="0" stopColor="#c88400" />
          <stop offset=".35" stopColor="#dc9408" />
          <stop offset=".65" stopColor="#b87408" />
          <stop offset="1" stopColor="#7a4a04" />
        </linearGradient>
        <linearGradient id="bore" x1="0" y1="0" x2="0" y2="1">
          <stop offset="0" stopColor="#7a4c10" />
          <stop offset=".3" stopColor="#9a6428" />
          <stop offset=".5" stopColor="#ee9a20" />
          <stop offset=".58" stopColor="#ffc400" />
          <stop offset=".85" stopColor="#ffdc10" />
          <stop offset="1" stopColor="#b87a00" />
        </linearGradient>
      </defs>

      <path d="M780 752L1172 762L1168 810L770 776z" fill="none" stroke="#3c58d8" strokeWidth="4" />

      <path d="M828 328L958 338L958 560L926 768L788 754z" fill="url(#neck)" />
      <path
        d="M940 335q14-34 28 2q12-34 27 2q12-34 26 2q12-34 27 2q12-34 26 2q12-34 27 2q12-34 26 2q10-30 22 0q6 240-38 455q-10 20-24-6q-12 24-26-2q-12 22-26-2q-12 22-26-3q-12 22-27-3q-12 22-26-3q-12 22-26-3q-10 20-30-6q38-230 42-430"
        fill="url(#screw)"
      />
      {TURNS.map((i) => (
        <g key={i} fill="none" transform={`translate(${i * 26} ${i * 2})`}>
          <path d="M946 325q2 240-42 458" stroke="#4a2e04" strokeWidth="5" />
          <path d="M953 322q2 240-42 462" stroke="#f0ac20" strokeWidth="2" />
          <path d="M959 328q0 240-42 458" stroke="#7a4c06" strokeWidth="3" />
          <path d="M966 334q-2 240-42 452" stroke="#c88a18" strokeWidth="2" />
        </g>
      ))}
      <path d="M1148 335q6 240-38 465" fill="none" stroke="#3a2404" strokeWidth="3" />

      <path d="M548 150C690 158 775 245 832 328C840 480 820 640 800 745C740 830 640 884 500 880z" fill="url(#dome)" />
      <path d="M548 150C690 158 775 245 832 328C840 480 820 640 800 745C740 830 640 884 500 880z" fill="url(#shine)" />
      <path d="M832 328C838 480 820 640 798 748" fill="none" stroke="#3a2800" strokeWidth="3" />

      <path d="M168 121L548 150C566 400 540 640 498 880L98 847C80 600 120 300 168 121z" fill="url(#body)" />
      <path d="M546 150C566 340 540 600 498 845" fill="none" stroke="#2c2000" strokeWidth="3" />

      <path d="M166 124C100 330 78 660 98 847C140 720 180 360 166 124z" fill="url(#bore)" stroke="#3a2a20" strokeWidth="3" />
      <path d="M158 150C136 250 126 380 118 480M166 150C166 280 160 400 150 500" fill="none" stroke="#3a3060" strokeWidth="3" />
      <path d="M98 847L500 880" stroke="#4450a0" strokeWidth="3" />

      <path d="M150 285L353 298L338 510L135 492z" fill="none" stroke="#f4bc6c" strokeWidth="4" />
      <path d="M150 486L486 512" stroke="#f8dca8" strokeWidth="4" />
      <path d="M483 503L530 517L483 522z" fill="#f4f0e4" />
      <text x="548" y="529" fontSize="28" fill="#f4dca0" textAnchor="middle">
        Y
      </text>

      <g stroke="#1c22b8" fill="none" strokeWidth="4">
        <path d="M162 130L148 480" strokeDasharray="22 8" strokeWidth="3" />
        <path d="M110 483h30M132 462v42M132 484L166 520M140 515L168 492" />
        <path d="M156 130L166 88L170 130z" fill="#1c22b8" />
      </g>
      <circle cx="153" cy="504" r="8" fill="#1c22b8" />
      <text x="169" y="78" fontSize="38" fill="#3038c8" textAnchor="middle">
        Z
      </text>
    </svg>
  );
}

function Triad() {
  return (
    <svg
      viewBox="0 0 60 64"
      className="absolute bottom-[52px] left-[52px] h-16 w-[60px]"
      fontFamily="Liberation Sans"
      fontSize="12"
      aria-hidden="true"
    >
      <path d="M14 28l21 2q3 0 3 3l-2 21l-23-2z" fill="#cdd0d0" stroke="#aeb1b1" />
      <path d="M10 53L12 22" stroke="#1f3fc8" strokeWidth="3" />
      <path d="M9 22L13 11l3 11z" fill="#1c2a9a" />
      <path d="M10 54l27 2" stroke="#8c8e8c" />
      <path d="M35 52l14 4l-14 4z" fill="#1f7a34" />
      <circle cx="9" cy="53" r="4" fill="#8a8078" />
      <circle cx="11" cy="54" r="3.500" fill="#a03028" />
      <path d="M8 60l7-7M9 53l6 7" stroke="#d03028" strokeWidth="1.200" />
      <text x="9" y="10" fill="#4450c8">
        Z
      </text>
      <text x="51" y="61" fill="#3a8a4a">
        Y
      </text>
    </svg>
  );
}

function GraphicsWindow() {
  return (
    <main className="flex min-w-0 flex-1 flex-col">
      <div className="flex h-[31px] items-end border-b-2 border-[#585a58] bg-[#e8ebe8]">
        <div className="flex h-[29px] w-[167px] items-center bg-[#565856] pl-1.5 text-white">
          <Icon name="partFile" className="size-3.5" />
          <span className="ml-1 flex-1">_model2.prt</span>
          <Icon name="docEdit" className="size-3.5" />
          <button aria-label="关闭" className="mr-1.5 ml-1">
            <svg viewBox="0 0 10 10" className="size-2.5">
              <path d="M1 1l8 8M9 1L1 9" stroke="#fff" strokeWidth="2.500" />
            </svg>
          </button>
        </div>
      </div>
      <div className="relative min-h-0 flex-1 overflow-hidden bg-linear-to-b from-[#b0b2b2] via-[#cbd0d1] via-45% to-[#e2e7e9] to-72%">
        <PartModel />
        <Triad />
        <div
          role="meter"
          aria-label="音量"
          aria-valuenow={52}
          className="absolute right-1 bottom-16 flex h-[88px] w-[11px] flex-col overflow-hidden rounded-full bg-[#9a9d9f]"
        >
          <span className="mt-auto h-[46px] bg-linear-to-b from-[#1f9c58] via-[#22b866] to-[#6ee06c]" />
        </div>
      </div>
    </main>
  );
}

/* ---------- bottom bars ---------- */

function StatusBar() {
  return (
    <footer>
      <div className="flex h-[26px] items-center justify-between border-t border-[#a8aaa8] bg-linear-to-b from-[#dcdedb] to-[#cdcfcc] pr-2">
        <span className="flex h-5 w-[34px] items-center justify-center border-r border-[#a8aaa8]">
          <Icon name="perp" className="size-3.5" />
        </span>
        <Caret />
      </div>
      <div className="relative flex h-8 items-center border-t border-b-2 border-t-[#f2f3f2] border-b-[#111] bg-[#d8dad7] font-bold text-[#141614]">
        <p className="w-[903px] border-r border-[#b4b6b4] pb-0.5 pl-[3px] leading-6">选择对象并使用 MB3，或者双击某一对象</p>
        <span className="h-7 flex-1 border-r border-[#b4b6b4]" />
        <span className="h-7 w-5 border-r border-[#f2f3f2]" />
        <span className="flex h-7 w-[76px] gap-1 border-r border-[#f2f3f2] pt-1 pl-[3px]">
          <span className="size-4 bg-[#8c8e8c]" />
          <Icon name="fullscreenDark" />
        </span>
        <span className="w-[18px]" />
        <input
          type="range"
          aria-label="播放进度"
          defaultValue={0}
          className="absolute right-2.5 bottom-1 h-2 w-[82px] appearance-none rounded-full bg-linear-to-r from-[#2f9cc8] from-58% to-[#5a6068] to-58% [&::-webkit-slider-thumb]:size-4 [&::-webkit-slider-thumb]:appearance-none [&::-webkit-slider-thumb]:rounded-full [&::-webkit-slider-thumb]:border-2 [&::-webkit-slider-thumb]:border-[#3f5a68] [&::-webkit-slider-thumb]:bg-[#2fa8d8]"
        />
      </div>
    </footer>
  );
}

export default function App() {
  return (
    <div className="flex h-screen flex-col overflow-hidden bg-[#d8dad7] font-['Open_Sans','Noto_Sans_CJK_SC',sans-serif] text-lg leading-6 text-[#141614]">
      <TitleBar />
      <Ribbon />
      <SelectionBar />
      <div className="flex min-h-0 flex-1">
        <ResourceBar />
        <PartNavigator />
        <SideStrip />
        <GraphicsWindow />
      </div>
      <StatusBar />
    </div>
  );
}
